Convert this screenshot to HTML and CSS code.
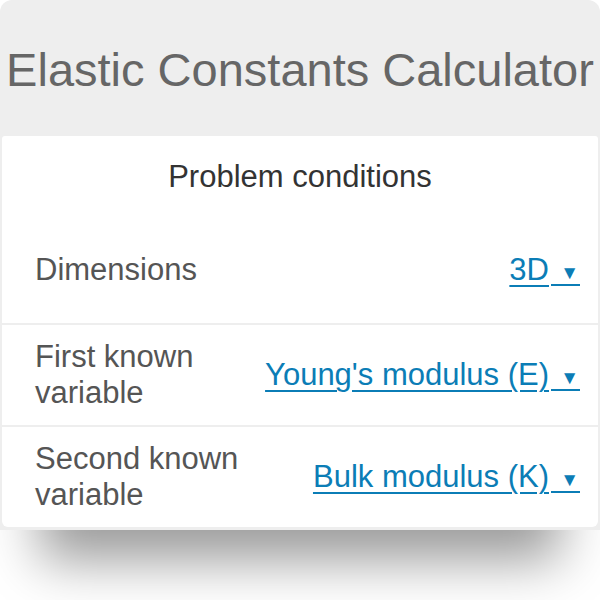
FILE: index.html
```html
<!DOCTYPE html>
<html lang="en">
<head>
  <meta charset="UTF-8" />
  <title>Elastic Constants Calculator</title>
  <link rel="stylesheet" href="styles.css">
</head>
<body>
  <div class="calc">
    <h1 class="calc-title">Elastic Constants Calculator</h1>

    <div class="panel panel-first">
      <h2 class="panel-title">Problem conditions</h2>
      <div class="row row-single">
        <span class="label">Dimensions</span>
        <a href="#" class="select"><span class="value">3D</span><span class="caret">▼</span></a>
      </div>
    </div>

    <div class="panel">
      <div class="row">
        <span class="label">First known<br>variable</span>
        <a href="#" class="select"><span class="value">Young's modulus (E)</span><span class="caret">▼</span></a>
      </div>
    </div>

    <div class="panel panel-last">
      <div class="row">
        <span class="label">Second known<br>variable</span>
        <a href="#" class="select"><span class="value">Bulk modulus (K)</span><span class="caret">▼</span></a>
      </div>
    </div>
  </div>
</body>
</html>
```

FILE: styles.css
```css
* {
  box-sizing: border-box;
}

html,
body {
  min-height: 600px;
}

body {
  margin: 0;
  background: #fff;
  font-family: 'Liberation Sans', Arial, sans-serif;
}

.calc {
  width: 600px;
  background: #eee;
  border-radius: 12px 12px 0 0;
  padding: 0 2px 3px;
  box-shadow: 0 70px 50px -40px rgba(0, 0, 0, 0.4);
}

.calc-title {
  margin: 0;
  padding: 42px 0 38px;
  font-size: 47px;
  line-height: 56px;
  font-weight: normal;
  text-align: center;
  color: #666;
}

.panel {
  background: #fff;
  margin-bottom: 2px;
}

.panel-first {
  border-radius: 3px 3px 0 0;
}

.panel-last {
  margin-bottom: 0;
  border-radius: 0 0 6px 6px;
}

.panel-title {
  margin: 0;
  padding: 23px 0;
  font-size: 31px;
  line-height: 36px;
  font-weight: normal;
  text-align: center;
  color: #333;
}

.row {
  display: flex;
  align-items: center;
  justify-content: space-between;
  padding: 14px 18px 14px 33px;
  font-size: 31px;
  line-height: 36px;
}

.row-single {
  padding-top: 34px;
  padding-bottom: 35px;
}

.label {
  color: #555;
}

.select {
  color: #0b7db6;
  text-decoration: none;
  white-space: nowrap;
}

.value {
  text-decoration: underline;
  text-decoration-thickness: 2px;
  text-underline-offset: 5px;
}

.caret {
  display: inline-block;
  width: 29px;
  margin-left: 2px;
  padding-right: 1px;
  text-align: right;
  font-size: 19px;
  line-height: 22px;
  vertical-align: 1px;
  border-bottom: 2px solid #0b7db6;
}
```
